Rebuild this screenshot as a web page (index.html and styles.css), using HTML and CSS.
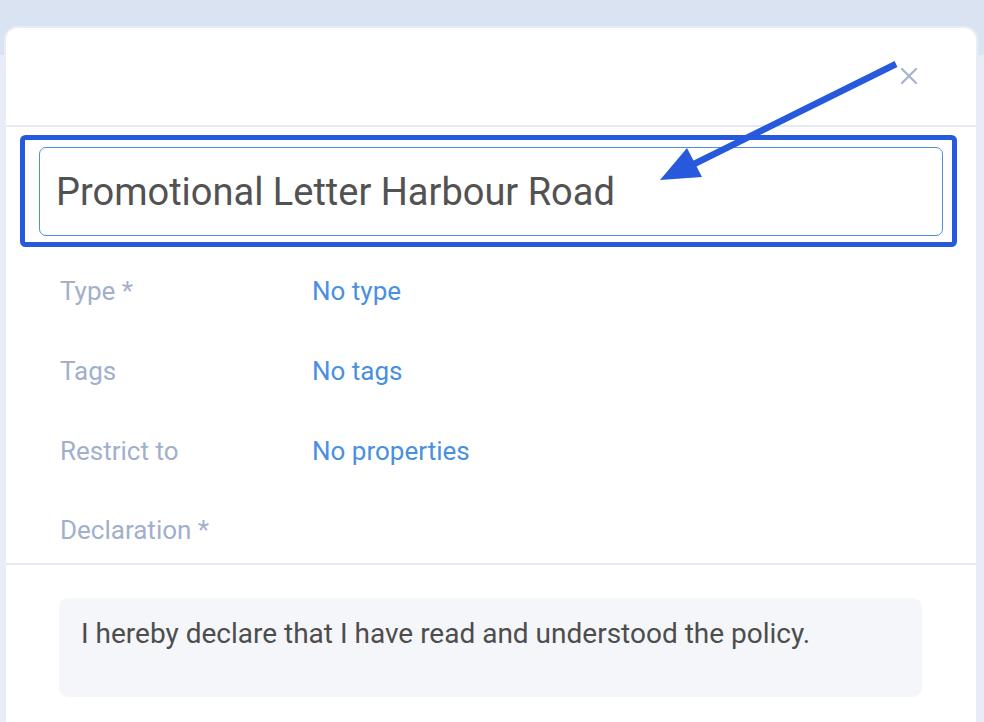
FILE: index.html
```html
<!DOCTYPE html>
<html>
<head>
<meta charset="utf-8">
<link rel="stylesheet" href="styles.css">
</head>
<body>
<div class="modal">
  <div class="modal-header">
    <button class="close" aria-label="Close">
      <svg width="18" height="18" viewBox="0 0 18 18"><path d="M2 2L16 16M16 2L2 16" stroke="#a7b2cc" stroke-width="2.2" stroke-linecap="round"/></svg>
    </button>
  </div>
  <div class="modal-body">
    <div class="title-wrap">
      <div class="title-input">Promotional Letter Harbour Road</div>
    </div>
    <div class="fields">
      <div class="field"><span class="label">Type *</span><span class="value">No type</span></div>
      <div class="field"><span class="label">Tags</span><span class="value">No tags</span></div>
      <div class="field"><span class="label">Restrict to</span><span class="value">No properties</span></div>
      <div class="field field-last"><span class="label">Declaration *</span></div>
    </div>
  </div>
  <div class="declaration-section">
    <div class="declaration-box">I hereby declare that I have read and understood the policy.</div>
  </div>
</div>
<svg class="annotation" width="984" height="722" viewBox="0 0 984 722">
  <rect x="22.5" y="137.5" width="932" height="107" rx="3" fill="none" stroke="#2659dc" stroke-width="5"/>
  <line x1="896" y1="64" x2="690" y2="166" stroke="#2659dc" stroke-width="6.5"/>
  <polygon points="660,180 687,148 702,177" fill="#2659dc"/>
</svg>
</body>
</html>
```
FILE: styles.css
```css
html, body {
  margin: 0;
  padding: 0;
  height: 100%;
  overflow: hidden;
}
body {
  background: linear-gradient(#dae3f2 0, #dae3f2 55px, #e8ecf6 55px);
  font-family: Roboto, "Liberation Sans", sans-serif;
  position: relative;
}
.modal {
  margin: 26px 6px 0 4px;
  height: 720px;
  background: #fff;
  border: 2px solid #e8edf6;
  border-bottom: none;
  border-radius: 14px 14px 0 0;
  box-sizing: border-box;
}
.modal-header {
  height: 97px;
  border-bottom: 2px solid #e4e9f3;
  display: flex;
  justify-content: flex-end;
  align-items: flex-start;
  padding-right: 58px;
}
.close {
  margin-top: 39px;
  background: none;
  border: none;
  padding: 0;
  width: 18px;
  height: 18px;
  display: flex;
}
.modal-body {
  padding: 20px 33px 0 33px;
  border-bottom: 2px solid #e4e9f3;
}
.title-input {
  height: 89px;
  border: 1px solid #4a90e2;
  border-radius: 7px;
  box-sizing: border-box;
  display: flex;
  align-items: center;
  padding-left: 16px;
  font-size: 38px;
  color: #525252;
}
.fields {
  padding: 15px 0 0 21px;
}
.field {
  height: 80px;
  display: flex;
  align-items: center;
  font-size: 26px;
  line-height: 30px;
}
.field-last {
  height: 72px;
  align-items: flex-start;
  padding-top: 24px;
  box-sizing: border-box;
}
.label {
  width: 252px;
  color: #a2afcc;
}
.value {
  color: #4a8fe0;
}
.declaration-section {
  padding: 33px 54px 0 53px;
}
.declaration-box {
  height: 99px;
  background: #f5f6fa;
  border-radius: 9px;
  padding: 19px 22px;
  box-sizing: border-box;
  font-size: 28px;
  line-height: 34px;
  color: #4d4d4d;
}
.annotation {
  position: absolute;
  left: 0;
  top: 0;
  pointer-events: none;
}
```
